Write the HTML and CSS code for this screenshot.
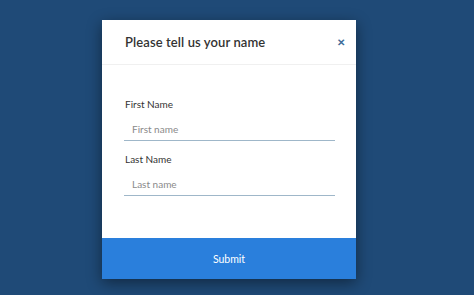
FILE: index.html
```html
<!DOCTYPE html>
<html>
<head>
<meta charset="utf-8">
<link rel="stylesheet" href="styles.css">
</head>
<body>
<div class="dialog">
  <div class="header">
    <span class="title">Please tell us your name</span>
    <span class="close">&#x2715;</span>
  </div>
  <div class="content">
    <div class="field">
      <label class="label">First Name</label>
      <input class="input" type="text" placeholder="First name">
    </div>
    <div class="field">
      <label class="label">Last Name</label>
      <input class="input" type="text" placeholder="Last name">
    </div>
  </div>
  <div class="submit">Submit</div>
</div>
</body>
</html>
```
FILE: styles.css
```css
html, body {
  margin: 0;
  padding: 0;
  height: 100%;
}
body {
  background: #1f4a77;
  font-family: Lato, "Open Sans", sans-serif;
  display: flex;
  justify-content: center;
  align-items: flex-start;
}
.dialog {
  margin: 20px 16px 0 0;
  width: 254px;
  height: 259px;
  background: #fff;
  display: flex;
  flex-direction: column;
  box-shadow: 0 4px 14px rgba(0, 0, 0, 0.45);
}
.header {
  height: 45px;
  box-sizing: border-box;
  border-bottom: 1px solid #f0f0f0;
  display: flex;
  align-items: center;
  justify-content: space-between;
  padding: 0 11px 0 23px;
}
.title {
  font-size: 13px;
  font-weight: 600;
  color: #333;
  letter-spacing: 0.1px;
}
.close {
  font-size: 10px;
  font-weight: 700;
  color: #3f6d9a;
}
.content {
  flex: 1;
  padding: 32px 21px 0 22px;
  display: flex;
  flex-direction: column;
  gap: 11px;
}
.field {
  display: flex;
  flex-direction: column;
}
.label {
  font-size: 10px;
  line-height: 14px;
  color: #333;
  margin-bottom: 6px;
  padding-left: 1px;
}
.input {
  height: 24px;
  box-sizing: border-box;
  border: none;
  border-bottom: 1px solid #9fb7c9;
  padding: 0 0 0 8px;
  font-family: Lato, "Open Sans", sans-serif;
  font-size: 10px;
  color: #333;
  outline: none;
  background: transparent;
}
.input::placeholder {
  color: #8a8a8a;
}
.submit {
  height: 41px;
  background: #2a7fdc;
  color: #fff;
  font-size: 10.5px;
  display: flex;
  align-items: center;
  justify-content: center;
}
```
